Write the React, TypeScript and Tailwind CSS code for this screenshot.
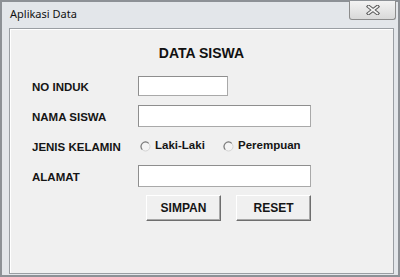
import React from "react";

function Radio() {
  return (
    <svg width="11" height="11" viewBox="0 0 11 11" className="shrink-0">
      <circle cx="5.5" cy="5.5" r="4.5" fill="#f4f4f4" stroke="#d4d4d4" strokeWidth="1" />
      <path d="M2.3 8.7 A4.5 4.5 0 0 1 8.7 2.3" fill="none" stroke="#7c7c7c" strokeWidth="1.2" />
    </svg>
  );
}

function CloseIcon() {
  return (
    <svg width="14" height="10" viewBox="0 0 14 10">
      <path d="M2.5 1.5 L11.5 8.5 M11.5 1.5 L2.5 8.5" stroke="#5a5a5a" strokeWidth="3.6" strokeLinecap="square" />
      <path d="M2.5 1.5 L11.5 8.5 M11.5 1.5 L2.5 8.5" stroke="#f4f4f4" strokeWidth="1.6" strokeLinecap="square" />
    </svg>
  );
}

const label =
  "w-[106px] shrink-0 text-[11.5px] font-bold text-[#151515] leading-none mt-[4px] [font-family:'Liberation_Sans',Arial,sans-serif]";
const input =
  "h-full bg-white border border-[#a9a9a9] border-t-[#8e8e8e] border-l-[#8e8e8e]";
const btn =
  "w-[75px] h-[26px] flex items-center justify-center bg-[#f0f0f0] border border-t-[#ffffff] border-l-[#ffffff] border-r-[#6e6e6e] border-b-[#6e6e6e] shadow-[inset_-1px_-1px_0_#a8a8a8] text-[12px] font-bold text-[#151515] [font-family:'Liberation_Sans',Arial,sans-serif]";

export default function App() {
  return (
    <div className="w-[400px] h-[277px] overflow-hidden bg-[#8d9196] pt-[2px] pl-[2px] pr-[2px] pb-[2px]">
      <div className="w-full h-full bg-[#e3e6ea] flex flex-col">
        {/* title bar */}
        <div className="h-[26px] shrink-0 flex items-start justify-between">
          <div className="pl-[8px] pt-[5px] text-[11px] leading-[14px] text-[#111] [font-family:'Noto_Sans',sans-serif]">
            Aplikasi Data
          </div>
          <div className="mr-[2px] -mt-[1px] w-[47px] h-[19px] flex items-center justify-center rounded-b-[3px] border border-t-0 border-[#8c8c8c] bg-gradient-to-b from-[#f3f3f3] to-[#d9d9d9]">
            <CloseIcon />
          </div>
        </div>
        {/* client */}
        <div className="ml-[7px] mr-[4px] mb-[1px] flex-1 border border-[#9a9ea3] bg-[#f0f0f0] shadow-[inset_1px_1px_0_#ffffff] flex flex-col">
          <div className="mt-[16px] h-[16px] text-center text-[14px] leading-[16px] font-bold text-[#111] [font-family:'Liberation_Sans',Arial,sans-serif]">
            DATA SISWA
          </div>
          <div className="pl-[22px] flex flex-col">
            <div className="mt-[15px] h-[20px] flex items-center">
              <div className={label}>NO INDUK</div>
              <div className={`${input} w-[90px]`} />
            </div>
            <div className="mt-[9px] h-[22px] flex items-center">
              <div className={label}>NAMA SISWA</div>
              <div className={`${input} w-[173px]`} />
            </div>
            <div className="mt-[11px] h-[16px] flex items-center">
              <div className={`${label} mt-[1px]`}>JENIS KELAMIN</div>
              <div className="flex items-center pl-[2px]">
                <Radio />
                <span className="ml-[4px] w-[68px] text-[11.5px] font-bold text-[#151515] [font-family:'Liberation_Sans',Arial,sans-serif]">
                  Laki-Laki
                </span>
                <Radio />
                <span className="ml-[4px] text-[11.5px] font-bold text-[#151515] [font-family:'Liberation_Sans',Arial,sans-serif]">
                  Perempuan
                </span>
              </div>
            </div>
            <div className="mt-[11px] h-[22px] flex items-center">
              <div className={label}>ALAMAT</div>
              <div className={`${input} w-[173px]`} />
            </div>
            <div className="mt-[8px] flex gap-[15px] pl-[114px]">
              <div className={btn}>SIMPAN</div>
              <div className={btn}>RESET</div>
            </div>
          </div>
        </div>
      </div>
    </div>
  );
}
